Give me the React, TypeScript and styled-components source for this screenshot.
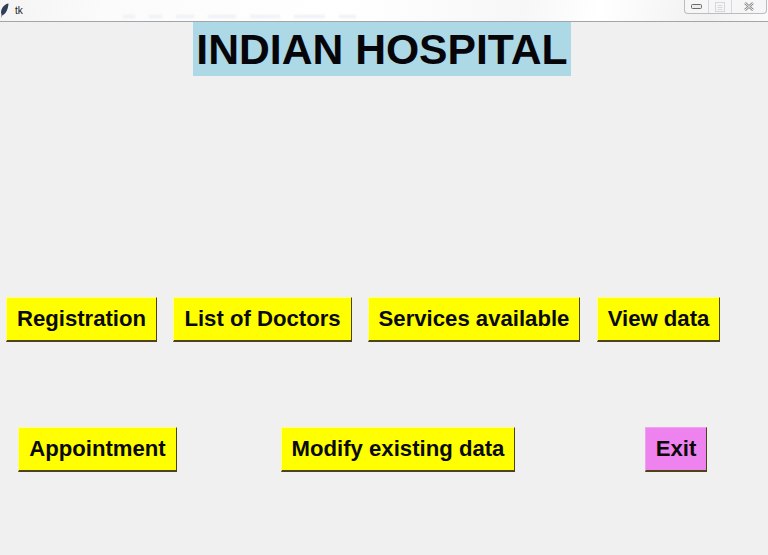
import React from "react";
import styled, { createGlobalStyle } from "styled-components";

const GlobalStyle = createGlobalStyle`
  html, body {
    margin: 0;
    padding: 0;
    background: #f0f0f0;
    font-family: "Liberation Sans", Arial, sans-serif;
    overflow: hidden;
  }
`;

const Page = styled.div`
  width: 768px;
  height: 555px;
  display: flex;
  flex-direction: column;
  background: #f0f0f0;
`;

const TitleBar = styled.div`
  height: 21px;
  flex: none;
  display: flex;
  align-items: flex-start;
  background: linear-gradient(100deg, #f4f4f4 0%, #fbfbfb 14%, #ffffff 45%, #f7f7f7 68%, #ffffff 78%, #f1f1f1 92%, #fafafa 100%);
  border-bottom: 1px solid #a3a6a8;
`;

const AppTag = styled.div`
  display: flex;
  align-items: center;
  gap: 6px;
  width: 123px;
  height: 20px;
  font-size: 10px;
  color: #222;
`;

const GhostMenu = styled.div`
  display: flex;
  gap: 14px;
  margin-top: 15px;
  flex: 1;
`;

const GhostItem = styled.span<{ $width: number }>`
  width: ${(p) => p.$width}px;
  height: 3px;
  background: #edf0f5;
  filter: blur(1px);
`;

const WindowControls = styled.div`
  display: flex;
  height: 13px;
  width: 81px;
  margin-right: 1px;
  background: #f6f6f6;
  border: 1px solid #b9bcc0;
  border-top: none;
  border-radius: 0 0 4px 4px;
`;

const ControlCell = styled.div<{ $width: number; $divider?: boolean }>`
  width: ${(p) => p.$width}px;
  display: flex;
  align-items: center;
  justify-content: center;
  border-right: ${(p) => (p.$divider ? "1px solid #d6d8da" : "none")};
`;

const Heading = styled.h1`
  align-self: flex-start;
  margin: 0 0 0 193px;
  width: 378px;
  height: 54px;
  display: flex;
  align-items: center;
  justify-content: center;
  background: #add8e6;
  color: #06060a;
  font-size: 42.67px;
  font-weight: 700;
  white-space: nowrap;
`;

const Row = styled.div<{ $top: number; $left: number }>`
  display: flex;
  margin-top: ${(p) => p.$top}px;
  padding-left: ${(p) => p.$left}px;
`;

const TkButton = styled.button<{ $width: number; $gap?: number; $bg?: string }>`
  width: ${(p) => p.$width}px;
  height: 45px;
  margin-left: ${(p) => p.$gap ?? 0}px;
  padding: 0;
  box-sizing: border-box;
  border: none;
  border-top: 1px solid ${(p) => (p.$bg ? "#f3a0f3" : "#ffff80")};
  border-left: 1px solid ${(p) => (p.$bg ? "#f3a0f3" : "#ffff80")};
  border-right: 1px solid #4c4416;
  border-bottom: 2px solid #4c4416;
  background: ${(p) => p.$bg ?? "#ffff00"};
  color: #0a0a0a;
  font-family: inherit;
  font-size: 22.15px;
  font-weight: 700;
  white-space: nowrap;
`;

const Feather = () => (
  <svg width="9" height="15" viewBox="0 0 9 15">
    <path d="M8.5 0.5C4.5 1 1.2 5 1 9.5L1.6 12L0.8 15L2.2 12.4C6 11.2 8.2 6 8.5 0.5Z" fill="#2f3d57" />
  </svg>
);

const MinimizeIcon = () => (
  <svg width="11" height="5" viewBox="0 0 11 5">
    <rect x="0.5" y="0.5" width="10" height="4" rx="1" fill="#ececec" stroke="#6a6a6a" />
  </svg>
);

const MaximizeIcon = () => (
  <svg width="10" height="10" viewBox="0 0 10 10">
    <rect x="0.5" y="0.5" width="9" height="9" fill="none" stroke="#d4d6d8" />
    <path d="M2.5 3.5H7.5M2.5 5.5H7.5M2.5 7.5H7.5" stroke="#d8dadc" />
  </svg>
);

const CloseIcon = () => (
  <svg width="10" height="9" viewBox="0 0 10 9">
    <path d="M1 1L9 8M9 1L1 8" stroke="#8a8a8a" strokeWidth="2.4" fill="none" />
    <path d="M1 1L9 8M9 1L1 8" stroke="#f2f2f2" strokeWidth="1" fill="none" />
  </svg>
);

const ghostWidths = [12, 13, 18, 28, 30, 31, 17];

export default function App() {
  return (
    <Page>
      <GlobalStyle />
      <TitleBar>
        <AppTag>
          <Feather />
          <span>tk</span>
        </AppTag>
        <GhostMenu>
          {ghostWidths.map((w, i) => (
            <GhostItem key={i} $width={w} />
          ))}
        </GhostMenu>
        <WindowControls>
          <ControlCell $width={23} $divider>
            <MinimizeIcon />
          </ControlCell>
          <ControlCell $width={22} $divider>
            <MaximizeIcon />
          </ControlCell>
          <ControlCell $width={34}>
            <CloseIcon />
          </ControlCell>
        </WindowControls>
      </TitleBar>
      <Heading>INDIAN HOSPITAL</Heading>
      <Row $top={221} $left={6}>
        <TkButton $width={151}>Registration</TkButton>
        <TkButton $width={179} $gap={16}>List of Doctors</TkButton>
        <TkButton $width={212} $gap={16}>Services available</TkButton>
        <TkButton $width={123} $gap={17}>View data</TkButton>
      </Row>
      <Row $top={85} $left={18}>
        <TkButton $width={159}>Appointment</TkButton>
        <TkButton $width={234} $gap={104}>Modify existing data</TkButton>
        <TkButton $width={62} $gap={130} $bg="#ee82ee">Exit</TkButton>
      </Row>
    </Page>
  );
}
